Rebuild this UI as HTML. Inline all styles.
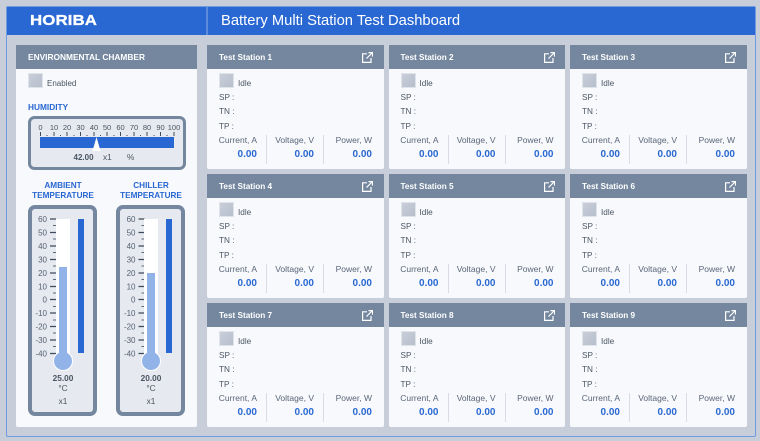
<!DOCTYPE html>
<html><head><meta charset="utf-8"><title>Battery Multi Station Test Dashboard</title>
<style>
html,body{margin:0;padding:0;width:760px;height:441px;overflow:hidden;background:#c8ced9;font-family:"Liberation Sans",sans-serif}
div{position:absolute;box-sizing:border-box}
#frame{left:6px;top:6px;width:750px;height:431px;border:1px solid #6f9ce0;border-radius:2px}
#hdr{left:7px;top:7px;width:748px;height:28px;background:#2968d2}
#div{left:206px;top:7px;width:2px;height:28px;background:#5d8cdc}
#logo{left:30px;top:12.5px;font-size:14.5px;font-weight:bold;color:#fff;letter-spacing:.1px;transform:scaleX(1.16);transform-origin:0 0;line-height:17px;-webkit-text-stroke:.3px #fff}
#title{left:221px;top:12px;font-size:14.75px;color:#fff;line-height:18px;white-space:nowrap}
.c{width:176.5px;height:124px;background:#f7f9fc;border-radius:2px}
.h{left:0;top:0;width:100%;height:24px;background:#74879f}
.t{left:12px;top:7px;font-size:8.2px;font-weight:bold;color:#fff;line-height:12px;white-space:nowrap}
svg.i{position:absolute;left:155px;top:7px;width:11px;height:11px}
.k{left:12px;top:28px;width:15px;height:15px;background:linear-gradient(135deg,#c9ced9,#b6bfcd);border:1px solid #dfe3ea}
.l{font-size:8.2px;color:#4b5563;line-height:11px;white-space:nowrap}
.id{left:31px;top:33px}
.s1{left:12px;top:47px}.s2{left:12px;top:61px}.s3{left:12px;top:76px}
.m{top:90px;text-align:right;width:56px;font-size:8.5px;color:#5b6678;line-height:11px;white-space:nowrap}
.v{top:103px;text-align:right;width:56px;font-size:10px;font-weight:bold;color:#2968d2;line-height:13px}
.a{left:-6px}.b{left:51px}.d{left:109px}
.x{top:90px;width:1px;height:29px;background:#d8dde5}
.x1{left:59px}.x2{left:116px}
#p{left:16px;top:45px;width:181px;height:382px;background:#f7f9fc;border-radius:2px}
</style></head><body>
<div id="frame"></div><div id="hdr"></div><div id="div"></div>
<div id="logo">HORIBA</div>
<div id="title">Battery Multi Station Test Dashboard</div>

<div id="p">
<div class="h"></div>
<div style="left:12px;top:6px;font-size:8.35px;font-weight:bold;color:#fff;line-height:12px;white-space:nowrap">ENVIRONMENTAL CHAMBER</div>
<div class="k"></div>
<div class="l id" style="font-size:8px">Enabled</div>
</div>

<svg style="position:absolute;left:0;top:0" width="760" height="441" font-family="Liberation Sans, sans-serif">
<text x="28" y="110" font-size="8.3" font-weight="bold" fill="#2968d2">HUMIDITY</text>
<rect x="29.500" y="117.500" width="155" height="51" rx="5" fill="#e6e9ef" stroke="#74879f" stroke-width="3"/>
<g font-size="7.500" fill="#4b5563" text-anchor="middle">
<text x="40.500" y="130">0</text><text x="54" y="130">10</text><text x="67" y="130">20</text><text x="80.500" y="130">30</text><text x="94" y="130">40</text><text x="107" y="130">50</text><text x="120.500" y="130">60</text><text x="134" y="130">70</text><text x="147" y="130">80</text><text x="160.500" y="130">90</text><text x="174" y="130">100</text>
</g>
<path d="M40.500 132v4M54 132v4M67 132v4M80.500 132v4M94 132v4M107 132v4M120.500 132v4M134 132v4M147 132v4M160.500 132v4M174 132v4M47 135v1M60.500 135v1M74 135v1M87 135v1M100.500 135v1M114 135v1M127 135v1M140.500 135v1M154 135v1M167 135v1" stroke="#3f4a5a" stroke-width="1" fill="none"/>
<rect x="40" y="137" width="134" height="11" fill="#2968d2"/>
<path d="M96.500 137L100.500 151H92.500Z" fill="#fff"/>
<text x="73.500" y="160" font-size="8" font-weight="bold" fill="#4b5563">42.00</text>
<text x="103" y="160" font-size="8.300" fill="#4b5563">x1</text>
<text x="127" y="160" font-size="8.300" fill="#4b5563">%</text>

<g font-size="8.200" font-weight="bold" fill="#2968d2" text-anchor="middle">
<text x="63" y="188">AMBIENT</text><text x="63" y="198">TEMPERATURE</text>
<text x="151" y="188">CHILLER</text><text x="151" y="198">TEMPERATURE</text>
</g>

<!-- gauge 1 -->
<rect x="30" y="207" width="65" height="207" rx="5" fill="#e6e9ef" stroke="#74879f" stroke-width="4"/>
<g font-size="8" fill="#566173" text-anchor="end">
<text x="47" y="222">60</text><text x="47" y="235.500">50</text><text x="47" y="249">40</text><text x="47" y="262.500">30</text><text x="47" y="276">20</text><text x="47" y="289.500">10</text><text x="47" y="302.500">0</text><text x="47" y="316">-10</text><text x="47" y="329.500">-20</text><text x="47" y="343">-30</text><text x="47" y="356.500">-40</text>
</g>
<path d="M50 219h6M50 232.500h6M50 246h6M50 259.500h6M50 273h6M50 286.500h6M50 299.500h6M50 313h6M50 326.500h6M50 340h6M50 353.500h6" stroke="#3f4a5a" stroke-width="1.200" fill="none"/>
<path d="M53 225.500h3M53 239h3M53 252.500h3M53 266h3M53 279.500h3M53 293h3M53 306.500h3M53 320h3M53 333h3M53 346.500h3" stroke="#5b6678" stroke-width="1" fill="none"/>
<rect x="56" y="219" width="14" height="136" fill="#fff"/>
<circle cx="63" cy="361" r="9.500" fill="#92b3e8" stroke="#fff" stroke-width="1"/>
<rect x="59" y="267" width="8" height="90" fill="#92b3e8"/>
<rect x="78" y="219" width="6" height="134" fill="#2968d2"/>
<g text-anchor="middle" fill="#4b5563">
<text x="63" y="381" font-size="8.300" font-weight="bold">25.00</text>
<text x="63" y="391" font-size="8.300">°C</text>
<text x="63" y="404" font-size="8.300">x1</text>
</g>

<!-- gauge 2 -->
<rect x="118" y="207" width="65" height="207" rx="5" fill="#e6e9ef" stroke="#74879f" stroke-width="4"/>
<g font-size="8" fill="#566173" text-anchor="end">
<text x="135.500" y="222">60</text><text x="135.500" y="235.500">50</text><text x="135.500" y="249">40</text><text x="135.500" y="262.500">30</text><text x="135.500" y="276">20</text><text x="135.500" y="289.500">10</text><text x="135.500" y="302.500">0</text><text x="135.500" y="316">-10</text><text x="135.500" y="329.500">-20</text><text x="135.500" y="343">-30</text><text x="135.500" y="356.500">-40</text>
</g>
<path d="M138.500 219h6M138.500 232.500h6M138.500 246h6M138.500 259.500h6M138.500 273h6M138.500 286.500h6M138.500 299.500h6M138.500 313h6M138.500 326.500h6M138.500 340h6M138.500 353.500h6" stroke="#3f4a5a" stroke-width="1.200" fill="none"/>
<path d="M141.500 225.500h3M141.500 239h3M141.500 252.500h3M141.500 266h3M141.500 279.500h3M141.500 293h3M141.500 306.500h3M141.500 320h3M141.500 333h3M141.500 346.500h3" stroke="#5b6678" stroke-width="1" fill="none"/>
<rect x="144" y="219" width="14" height="136" fill="#fff"/>
<circle cx="151" cy="361" r="9.500" fill="#92b3e8" stroke="#fff" stroke-width="1"/>
<rect x="147" y="273" width="8" height="84" fill="#92b3e8"/>
<rect x="166" y="219" width="6" height="134" fill="#2968d2"/>
<g text-anchor="middle" fill="#4b5563">
<text x="151" y="381" font-size="8.300" font-weight="bold">20.00</text>
<text x="151" y="391" font-size="8.300">°C</text>
<text x="151" y="404" font-size="8.300">x1</text>
</g>
</svg>

<div class="c" style="left:207px;top:45px"><div class="h"></div><div class="t">Test Station 1</div><svg class="i" viewBox="0 0 11 11" fill="none" stroke="#fff" stroke-width="1.200"><path d="M5 1.800H.6V10.400H9V6"/><path d="M4.500 6.500L10 1M6.500 .6h4V4.600"/></svg><div class="k"></div><div class="l id">Idle</div><div class="l s1">SP :</div><div class="l s2">TN :</div><div class="l s3">TP :</div><div class="m a">Current, A</div><div class="v a">0.00</div><div class="x x1"></div><div class="m b">Voltage, V</div><div class="v b">0.00</div><div class="x x2"></div><div class="m d">Power, W</div><div class="v d">0.00</div></div>

<div class="c" style="left:388.500px;top:45px"><div class="h"></div><div class="t">Test Station 2</div><svg class="i" viewBox="0 0 11 11" fill="none" stroke="#fff" stroke-width="1.200"><path d="M5 1.800H.6V10.400H9V6"/><path d="M4.500 6.500L10 1M6.500 .6h4V4.600"/></svg><div class="k"></div><div class="l id">Idle</div><div class="l s1">SP :</div><div class="l s2">TN :</div><div class="l s3">TP :</div><div class="m a">Current, A</div><div class="v a">0.00</div><div class="x x1"></div><div class="m b">Voltage, V</div><div class="v b">0.00</div><div class="x x2"></div><div class="m d">Power, W</div><div class="v d">0.00</div></div>

<div class="c" style="left:570px;top:45px"><div class="h"></div><div class="t">Test Station 3</div><svg class="i" viewBox="0 0 11 11" fill="none" stroke="#fff" stroke-width="1.200"><path d="M5 1.800H.6V10.400H9V6"/><path d="M4.500 6.500L10 1M6.500 .6h4V4.600"/></svg><div class="k"></div><div class="l id">Idle</div><div class="l s1">SP :</div><div class="l s2">TN :</div><div class="l s3">TP :</div><div class="m a">Current, A</div><div class="v a">0.00</div><div class="x x1"></div><div class="m b">Voltage, V</div><div class="v b">0.00</div><div class="x x2"></div><div class="m d">Power, W</div><div class="v d">0.00</div></div>

<div class="c" style="left:207px;top:174px"><div class="h"></div><div class="t">Test Station 4</div><svg class="i" viewBox="0 0 11 11" fill="none" stroke="#fff" stroke-width="1.200"><path d="M5 1.800H.6V10.400H9V6"/><path d="M4.500 6.500L10 1M6.500 .6h4V4.600"/></svg><div class="k"></div><div class="l id">Idle</div><div class="l s1">SP :</div><div class="l s2">TN :</div><div class="l s3">TP :</div><div class="m a">Current, A</div><div class="v a">0.00</div><div class="x x1"></div><div class="m b">Voltage, V</div><div class="v b">0.00</div><div class="x x2"></div><div class="m d">Power, W</div><div class="v d">0.00</div></div>

<div class="c" style="left:388.500px;top:174px"><div class="h"></div><div class="t">Test Station 5</div><svg class="i" viewBox="0 0 11 11" fill="none" stroke="#fff" stroke-width="1.200"><path d="M5 1.800H.6V10.400H9V6"/><path d="M4.500 6.500L10 1M6.500 .6h4V4.600"/></svg><div class="k"></div><div class="l id">Idle</div><div class="l s1">SP :</div><div class="l s2">TN :</div><div class="l s3">TP :</div><div class="m a">Current, A</div><div class="v a">0.00</div><div class="x x1"></div><div class="m b">Voltage, V</div><div class="v b">0.00</div><div class="x x2"></div><div class="m d">Power, W</div><div class="v d">0.00</div></div>

<div class="c" style="left:570px;top:174px"><div class="h"></div><div class="t">Test Station 6</div><svg class="i" viewBox="0 0 11 11" fill="none" stroke="#fff" stroke-width="1.200"><path d="M5 1.800H.6V10.400H9V6"/><path d="M4.500 6.500L10 1M6.500 .6h4V4.600"/></svg><div class="k"></div><div class="l id">Idle</div><div class="l s1">SP :</div><div class="l s2">TN :</div><div class="l s3">TP :</div><div class="m a">Current, A</div><div class="v a">0.00</div><div class="x x1"></div><div class="m b">Voltage, V</div><div class="v b">0.00</div><div class="x x2"></div><div class="m d">Power, W</div><div class="v d">0.00</div></div>

<div class="c" style="left:207px;top:303px"><div class="h"></div><div class="t">Test Station 7</div><svg class="i" viewBox="0 0 11 11" fill="none" stroke="#fff" stroke-width="1.200"><path d="M5 1.800H.6V10.400H9V6"/><path d="M4.500 6.500L10 1M6.500 .6h4V4.600"/></svg><div class="k"></div><div class="l id">Idle</div><div class="l s1">SP :</div><div class="l s2">TN :</div><div class="l s3">TP :</div><div class="m a">Current, A</div><div class="v a">0.00</div><div class="x x1"></div><div class="m b">Voltage, V</div><div class="v b">0.00</div><div class="x x2"></div><div class="m d">Power, W</div><div class="v d">0.00</div></div>

<div class="c" style="left:388.500px;top:303px"><div class="h"></div><div class="t">Test Station 8</div><svg class="i" viewBox="0 0 11 11" fill="none" stroke="#fff" stroke-width="1.200"><path d="M5 1.800H.6V10.400H9V6"/><path d="M4.500 6.500L10 1M6.500 .6h4V4.600"/></svg><div class="k"></div><div class="l id">Idle</div><div class="l s1">SP :</div><div class="l s2">TN :</div><div class="l s3">TP :</div><div class="m a">Current, A</div><div class="v a">0.00</div><div class="x x1"></div><div class="m b">Voltage, V</div><div class="v b">0.00</div><div class="x x2"></div><div class="m d">Power, W</div><div class="v d">0.00</div></div>

<div class="c" style="left:570px;top:303px"><div class="h"></div><div class="t">Test Station 9</div><svg class="i" viewBox="0 0 11 11" fill="none" stroke="#fff" stroke-width="1.200"><path d="M5 1.800H.6V10.400H9V6"/><path d="M4.500 6.500L10 1M6.500 .6h4V4.600"/></svg><div class="k"></div><div class="l id">Idle</div><div class="l s1">SP :</div><div class="l s2">TN :</div><div class="l s3">TP :</div><div class="m a">Current, A</div><div class="v a">0.00</div><div class="x x1"></div><div class="m b">Voltage, V</div><div class="v b">0.00</div><div class="x x2"></div><div class="m d">Power, W</div><div class="v d">0.00</div></div>
</body></html>
